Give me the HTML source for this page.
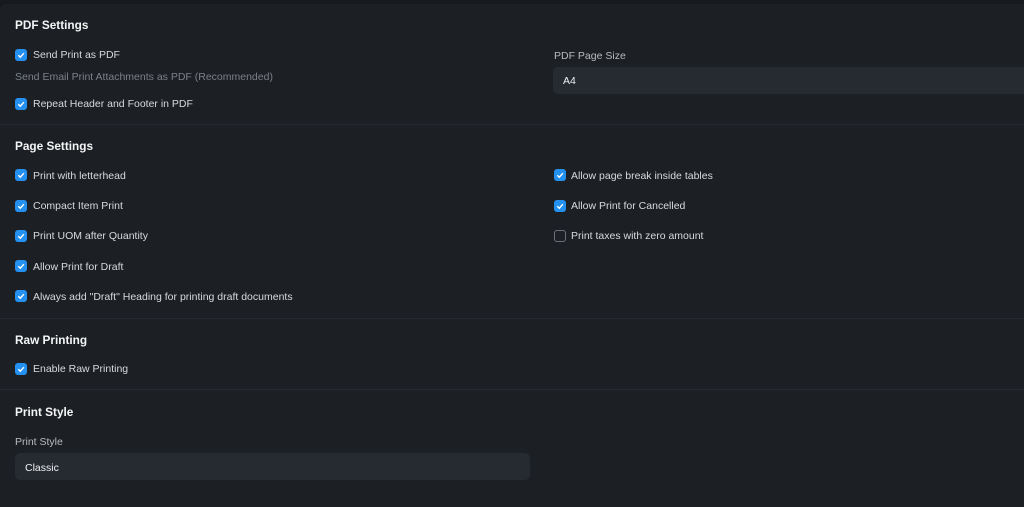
<!DOCTYPE html>
<html><head><style>
*{margin:0;padding:0;box-sizing:border-box}
body{width:1024px;height:507px;background:#17191c;font-family:"Liberation Sans",sans-serif;overflow:hidden;position:relative}
.card{position:absolute;left:0;top:4px;width:1024px;height:503px;background:#1c1f23;border-top-left-radius:6px}
.a{position:absolute;white-space:nowrap;line-height:14px}
.h{font-size:11.8px;font-weight:bold;color:#f4f5f6}
.t{font-size:10.5px;color:#d8dadd}
.d{font-size:10.5px;color:#7c8088}
.l{font-size:10.5px;color:#b8bbc0}
.cb{position:absolute;width:12px;height:12px;border-radius:3px;background:#2490ef}
.cb svg{position:absolute;left:0;top:0}
.cb.off{background:transparent;border:1px solid #6b7079}
.hr{position:absolute;left:0;width:1024px;height:1px;background:#262a30}
.in{position:absolute;background:#262a31;border-radius:5px}
</style></head><body>
<div class="card"></div>

<div class="a h" style="left:15px;top:18px">PDF Settings</div>
<div class="cb" style="left:15px;top:49px"><svg width="12" height="12"><path d="M3.3 6.2l2 2 3.6-4" stroke="#fff" stroke-width="1.4" fill="none"/></svg></div>
<div class="a t" style="left:33px;top:48px">Send Print as PDF</div>
<div class="a d" style="left:15px;top:70px">Send Email Print Attachments as PDF (Recommended)</div>
<div class="cb" style="left:15px;top:98px"><svg width="12" height="12"><path d="M3.3 6.2l2 2 3.6-4" stroke="#fff" stroke-width="1.4" fill="none"/></svg></div>
<div class="a t" style="left:33px;top:97px">Repeat Header and Footer in PDF</div>
<div class="a l" style="left:554px;top:49px">PDF Page Size</div>
<div class="in" style="left:553px;top:67px;width:480px;height:27px"></div>
<div class="a t" style="left:563px;top:74px;color:#f0f1f2">A4</div>
<div class="hr" style="top:124px"></div>

<div class="a h" style="left:15px;top:139px">Page Settings</div>
<div class="cb" style="left:15px;top:169px"><svg width="12" height="12"><path d="M3.3 6.2l2 2 3.6-4" stroke="#fff" stroke-width="1.4" fill="none"/></svg></div>
<div class="a t" style="left:33px;top:169px">Print with letterhead</div>
<div class="cb" style="left:15px;top:200px"><svg width="12" height="12"><path d="M3.3 6.2l2 2 3.6-4" stroke="#fff" stroke-width="1.4" fill="none"/></svg></div>
<div class="a t" style="left:33px;top:199px">Compact Item Print</div>
<div class="cb" style="left:15px;top:230px"><svg width="12" height="12"><path d="M3.3 6.2l2 2 3.6-4" stroke="#fff" stroke-width="1.4" fill="none"/></svg></div>
<div class="a t" style="left:33px;top:229px">Print UOM after Quantity</div>
<div class="cb" style="left:15px;top:260px"><svg width="12" height="12"><path d="M3.3 6.2l2 2 3.6-4" stroke="#fff" stroke-width="1.4" fill="none"/></svg></div>
<div class="a t" style="left:33px;top:260px">Allow Print for Draft</div>
<div class="cb" style="left:15px;top:290px"><svg width="12" height="12"><path d="M3.3 6.2l2 2 3.6-4" stroke="#fff" stroke-width="1.4" fill="none"/></svg></div>
<div class="a t" style="left:33px;top:290px">Always add "Draft" Heading for printing draft documents</div>

<div class="cb" style="left:554px;top:169px"><svg width="12" height="12"><path d="M3.3 6.2l2 2 3.6-4" stroke="#fff" stroke-width="1.4" fill="none"/></svg></div>
<div class="a t" style="left:571px;top:169px">Allow page break inside tables</div>
<div class="cb" style="left:554px;top:200px"><svg width="12" height="12"><path d="M3.3 6.2l2 2 3.6-4" stroke="#fff" stroke-width="1.4" fill="none"/></svg></div>
<div class="a t" style="left:571px;top:199px">Allow Print for Cancelled</div>
<div class="cb off" style="left:554px;top:230px"></div>
<div class="a t" style="left:571px;top:229px">Print taxes with zero amount</div>
<div class="hr" style="top:318px"></div>

<div class="a h" style="left:15px;top:333px">Raw Printing</div>
<div class="cb" style="left:15px;top:363px"><svg width="12" height="12"><path d="M3.3 6.2l2 2 3.6-4" stroke="#fff" stroke-width="1.4" fill="none"/></svg></div>
<div class="a t" style="left:33px;top:362px">Enable Raw Printing</div>
<div class="hr" style="top:389px"></div>

<div class="a h" style="left:15px;top:405px">Print Style</div>
<div class="a l" style="left:15px;top:435px">Print Style</div>
<div class="in" style="left:15px;top:453px;width:515px;height:27px"></div>
<div class="a t" style="left:25px;top:461px;color:#f0f1f2">Classic</div>
</body></html>
